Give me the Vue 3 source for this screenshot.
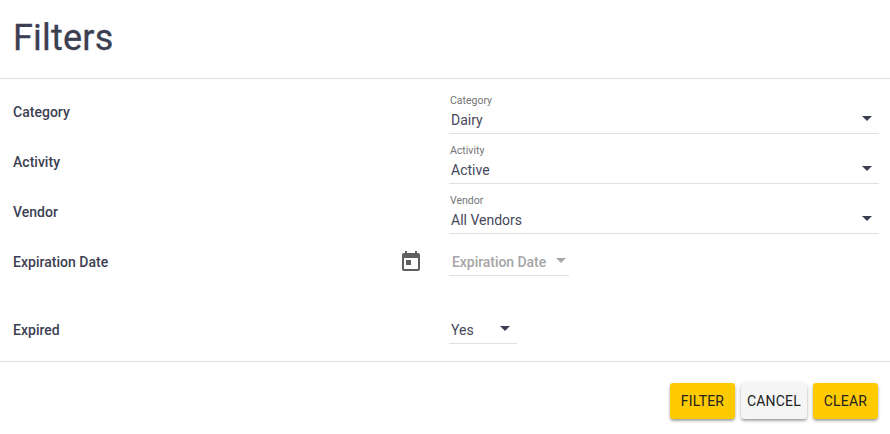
<script setup>
const rows = [
  { name: 'Category', value: 'Dairy' },
  { name: 'Activity', value: 'Active' },
  { name: 'Vendor', value: 'All Vendors' },
]
</script>

<template>
  <div class="dialog">
    <header class="title"><h2>Filters</h2></header>
    <main class="content">
      <div v-for="r in rows" :key="r.name" class="row">
        <div class="label">{{ r.name }}</div>
        <div class="field full">
          <span class="float">{{ r.name }}</span>
          <div class="select">
            <span class="value">{{ r.value }}</span>
            <span class="arrow"></span>
          </div>
        </div>
      </div>
      <div class="row date-row">
        <div class="label">Expiration Date</div>
        <svg class="cal" viewBox="0 0 24 24" width="24" height="24"><path fill="#5f5f5f" d="M19 3h-1V1h-2v2H8V1H6v2H5c-1.11 0-1.99.9-1.99 2L3 19c0 1.1.89 2 2 2h14c1.1 0 2-.9 2-2V5c0-1.1-.9-2-2-2zm0 16H5V8h14v11zM7 10h5v5H7z"/></svg>
        <div class="select date">
          <span class="value muted">Expiration Date</span>
          <span class="arrow grey"></span>
        </div>
      </div>
      <div class="row expired-row">
        <div class="label">Expired</div>
        <div class="select yes">
          <span class="value">Yes</span>
          <span class="arrow"></span>
        </div>
      </div>
    </main>
    <footer class="actions">
      <button class="btn primary">FILTER</button>
      <button class="btn wide">CANCEL</button>
      <button class="btn primary">CLEAR</button>
    </footer>
  </div>
</template>

<style>
html, body { margin: 0; background: #fff; }
</style>

<style scoped>
.dialog {
  width: 890px;
  height: 434px;
  font-family: Roboto, "Liberation Sans", sans-serif;
  color: #3c3f52;
  display: flex;
  flex-direction: column;
  overflow: hidden;
}
.title {
  height: 78px;
  border-bottom: 1px solid #e0e0e0;
  padding: 0 13px;
  box-sizing: content-box;
}
h2 {
  margin: 0;
  font-size: 36px;
  font-weight: 400;
  letter-spacing: 0.2px;
  -webkit-text-stroke: 0.3px #3c3f52;
  line-height: 76px;
}
.content {
  height: 282px;
  padding: 0 11px 0 13px;
  border-bottom: 1px solid #e0e0e0;
}
.row {
  display: flex;
  align-items: center;
  height: 50px;
  position: relative;
}
.row:first-child { margin-top: 8px; }
.label {
  width: 436px;
  flex: none;
  font-size: 14px;
  font-weight: 500;
  line-height: 20px;
  letter-spacing: 0.02px;
}
.field.full {
  width: 430px;
  height: 48px;
  position: relative;
}
.float {
  position: absolute;
  left: 1px;
  top: 7px;
  font-size: 10.5px;
  line-height: 12px;
  color: #757575;
}
.full .select {
  position: absolute;
  left: 0;
  right: 0;
  bottom: 2px;
  height: 28px;
  padding-right: 7px;
}
.select {
  border-bottom: 1px solid #e0e0e0;
  display: flex;
  align-items: center;
  justify-content: space-between;
  box-sizing: border-box;
  font-size: 14px;
  padding: 0 6px 0 2px;
}
.value { color: #45485a; }
.arrow {
  width: 0;
  height: 0;
  border-left: 5px solid transparent;
  border-right: 5px solid transparent;
  border-top: 5px solid #3c3f52;
  position: relative;
  top: -1px;
}
.arrow.grey { border-top-color: #a8a8a8; margin-right: -3px; }
.date-row { height: 50px; }
.cal {
  position: absolute;
  left: 386px;
  top: 13px;
}
.select.date {
  width: 120px;
  height: 28px;
  padding-left: 3px;
}
.value.muted { color: #a5a5a5; font-weight: 500; letter-spacing: -0.05px; }
.expired-row { margin-top: 18px; }
.select.yes {
  width: 68px;
  height: 28px;
  padding-right: 7px;
}
.actions {
  display: flex;
  justify-content: flex-end;
  gap: 6px;
  padding: 21px 12px 0 0;
}
.btn {
  height: 36px;
  width: 65px;
  border: none;
  border-radius: 3px;
  background: #f5f5f5;
  color: #212121;
  font-family: inherit;
  font-size: 14px;
  font-weight: 400;
  letter-spacing: 0.2px;
  padding: 0;
  box-shadow: 0 2px 3px -1px rgba(0,0,0,.3), 0 2px 3px rgba(0,0,0,.14), 0 1px 5px rgba(0,0,0,.1);
}
.btn.wide { width: 66px; }
.btn.primary { background: #ffca00; }
</style>
